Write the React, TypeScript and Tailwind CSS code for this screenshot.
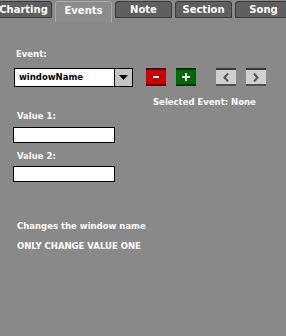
const tabs = ["Charting", "Events", "Note", "Section", "Song"];

const font = "font-['DejaVu_Sans',sans-serif] font-bold text-[8.5px] text-white";

function SquareButton({ tone, children }: { tone: "red" | "green" | "gray"; children: React.ReactNode }) {
  const tones = {
    red: "bg-[#c80000] border-t-[#5a0000] border-b-[#6a0000] text-white",
    green: "bg-[#006a00] border-t-[#003000] border-b-[#003800] text-white",
    gray: "bg-[#d0d0d0] border-t-[#3a3a3a] border-b-[#505050] text-[#505050]",
  };
  return (
    <div className={`w-[20px] h-[18px] border-t-2 border-b-2 flex items-center justify-center ${tones[tone]}`}>
      {children}
    </div>
  );
}

export default function App() {
  return (
    <div className="w-[286px] h-[336px] bg-[#898989] overflow-hidden">
      {/* Tabs */}
      <div className="flex gap-[3px] -ml-[5px] h-[22px] items-start pt-[1px]">
        {tabs.map((t) => {
          const active = t === "Events";
          return (
            <div
              key={t}
              className={`shrink-0 w-[57px] flex items-center justify-center rounded-t-[3px] border font-['DejaVu_Sans',sans-serif] font-bold text-[10px] text-white ${
                active
                  ? "h-[21px] bg-[#8c8c8c] border-[#a8a8a8] border-b-0 pb-[4px]"
                  : "h-[17px] bg-[#5f5f5f] border-[#3a3a3a]"
              }`}
            >
              {t}
            </div>
          );
        })}
      </div>

      <div className="pl-[14px] pt-[28px]">
        <div className={`${font} ml-[2px] leading-none`}>Event:</div>

        <div className="flex items-center mt-[9px]">
          <div className="w-[119px] h-[19px] bg-white border border-black flex">
            <div className="flex-1 flex items-center pl-[4px] font-['DejaVu_Sans',sans-serif] font-bold text-[8.5px] text-black">
              windowName
            </div>
            <div className="w-[18px] bg-[#c4c4c4] border-l border-black flex items-center justify-center">
              <svg width="9" height="5" viewBox="0 0 9 5">
                <polygon points="0,0 9,0 4.5,5" fill="#000" />
              </svg>
            </div>
          </div>
          <div className="ml-[13px] flex gap-[10px]">
            <SquareButton tone="red">
              <div className="w-[6px] h-[2px] bg-white" />
            </SquareButton>
            <SquareButton tone="green">
              <svg width="8" height="8" viewBox="0 0 8 8">
                <rect x="3" y="0" width="2" height="8" fill="#fff" />
                <rect x="0" y="3" width="8" height="2" fill="#fff" />
              </svg>
            </SquareButton>
          </div>
          <div className="ml-[20px] flex gap-[10px]">
            <SquareButton tone="gray">
              <svg width="6" height="9" viewBox="0 0 6 9">
                <polyline points="5,0.5 1.5,4.5 5,8.5" fill="none" stroke="#555" strokeWidth="2" />
              </svg>
            </SquareButton>
            <SquareButton tone="gray">
              <svg width="6" height="9" viewBox="0 0 6 9">
                <polyline points="1,0.5 4.5,4.5 1,8.5" fill="none" stroke="#555" strokeWidth="2" />
              </svg>
            </SquareButton>
          </div>
        </div>

        <div className={`${font} leading-none mt-[11px] ml-[139px]`}>Selected Event: None</div>

        <div className={`${font} leading-none mt-[6px] ml-[3px]`}>Value 1:</div>
        <div className="mt-[6px] -ml-[1px] w-[102px] h-[16px] bg-white border border-black" />

        <div className={`${font} leading-none mt-[9px] ml-[3px]`}>Value 2:</div>
        <div className="mt-[6px] -ml-[1px] w-[102px] h-[16px] bg-white border border-black" />

        <div className={`${font} leading-none mt-[40px] ml-[3px]`}>Changes the window name</div>
        <div className={`${font} leading-none mt-[11px] ml-[3px]`}>ONLY CHANGE VALUE ONE</div>
      </div>
    </div>
  );
}
